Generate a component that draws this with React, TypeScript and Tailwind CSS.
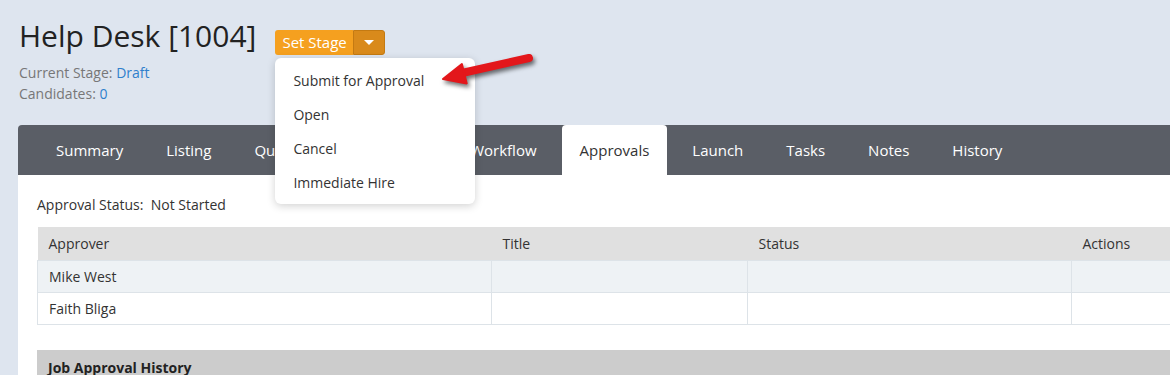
import React from 'react';

const tabs = ['Summary', 'Listing', 'Questions', 'Postings', 'Workflow', 'Approvals', 'Launch', 'Tasks', 'Notes', 'History'];
const menuItems = ['Submit for Approval', 'Open', 'Cancel', 'Immediate Hire'];
const approvers = ['Mike West', 'Faith Bliga'];

function Arrow() {
  // red annotation arrow pointing at the first menu item
  return (
    <svg
      className="absolute z-20 left-[436px] top-[46px] drop-shadow-[2px_3px_2px_rgba(0,0,0,0.55)]"
      width="104"
      height="48"
      viewBox="0 0 104 48"
    >
      <line x1="26" y1="27" x2="93" y2="12" stroke="#e3171b" strokeWidth="8" strokeLinecap="round" />
      <polygon points="7,33 25.9,18 30.7,37.4" fill="#e3171b" stroke="#e3171b" strokeWidth="2" strokeLinejoin="round" />
    </svg>
  );
}

function StageDropdown() {
  return (
    <div className="relative mt-[12px] ml-[19px]">
      <div className="flex h-[25px] text-[15px] text-white">
        <button className="h-full pl-[7px] pr-[6px] bg-[#f5a01f] rounded-l-[3px] leading-none">Set Stage</button>
        <button className="h-full w-[32px] flex items-center justify-center bg-[#d98a1b] border border-[#c47a12] rounded-r-[3px]">
          <span className="block w-0 h-0 border-l-[5px] border-r-[5px] border-t-[5px] border-l-transparent border-r-transparent border-t-white" />
        </button>
      </div>
      <div className="absolute left-0 top-[28px] w-[200px] py-[5px] bg-white rounded-[6px] shadow-[0_2px_8px_rgba(0,0,0,0.18)] z-10">
        {menuItems.map((item) => (
          <div key={item} className="h-[34px] flex items-center pl-[18px] text-[14px] text-[#333]">
            {item}
          </div>
        ))}
      </div>
    </div>
  );
}

export default function App() {
  return (
    <div className="relative w-[1170px] h-[375px] overflow-hidden bg-[#dee5ef] font-['Open_Sans',sans-serif] text-[#333]">
      {/* Header */}
      <div className="pl-[19px] pt-[18px]">
        <div className="flex items-start">
          <h1 className="text-[30px] leading-[36px] text-[#222]">Help Desk [1004]</h1>
          <StageDropdown />
        </div>
        <div className="mt-[7px] text-[14px] leading-[21px] text-[#777]">
          <div>
            Current Stage: <span className="text-[#2f7fcc]">Draft</span>
          </div>
          <div>
            Candidates: <span className="text-[#2f7fcc]">0</span>
          </div>
        </div>
      </div>

      {/* Panel */}
      <div className="mt-[21px] ml-[18px] w-[1200px]">
        <div className="h-[50px] flex items-stretch gap-[7px] pl-[20px] bg-[#5a5e66] rounded-tl-[4px]">
          {tabs.map((t) =>
            t === 'Approvals' ? (
              <div key={t} className="px-[18px] flex items-center bg-white text-[#333] text-[15px] rounded-t-[4px]">
                {t}
              </div>
            ) : (
              <div key={t} className="px-[18px] flex items-center text-white text-[15px]">
                {t}
              </div>
            )
          )}
        </div>

        <div className="bg-white pl-[19px] pt-[19px] pb-[20px]">
          <div className="text-[14px] leading-[21px] text-[#333]">Approval Status:&nbsp; Not Started</div>

          <table className="mt-[12px] border-collapse text-[14px] text-[#333] table-fixed w-[1144px]">
            <colgroup>
              <col className="w-[454px]" />
              <col className="w-[256px]" />
              <col className="w-[324px]" />
              <col className="w-[110px]" />
            </colgroup>
            <thead>
              <tr className="bg-[#e0e0e0] h-[33px]">
                <th className="text-left font-normal px-[11px]">Approver</th>
                <th className="text-left font-normal px-[11px]">Title</th>
                <th className="text-left font-normal px-[11px]">Status</th>
                <th className="text-left font-normal px-[11px]">Actions</th>
              </tr>
            </thead>
            <tbody>
              {approvers.map((name, i) => (
                <tr key={name} className={i === 0 ? 'bg-[#eef2f5] h-[32px]' : 'bg-white h-[32px]'}>
                  <td className="px-[11px] border border-[#dde3e8]">{name}</td>
                  <td className="px-[11px] border border-[#dde3e8]"></td>
                  <td className="px-[11px] border border-[#dde3e8]"></td>
                  <td className="px-[11px] border border-[#dde3e8]"></td>
                </tr>
              ))}
            </tbody>
          </table>

          <div className="mt-[25px] w-[1144px] h-[36px] bg-[#cccccc] flex items-center px-[11px] text-[14px] font-bold text-[#222]">
            Job Approval History
          </div>
        </div>
      </div>

      <Arrow />
    </div>
  );
}
